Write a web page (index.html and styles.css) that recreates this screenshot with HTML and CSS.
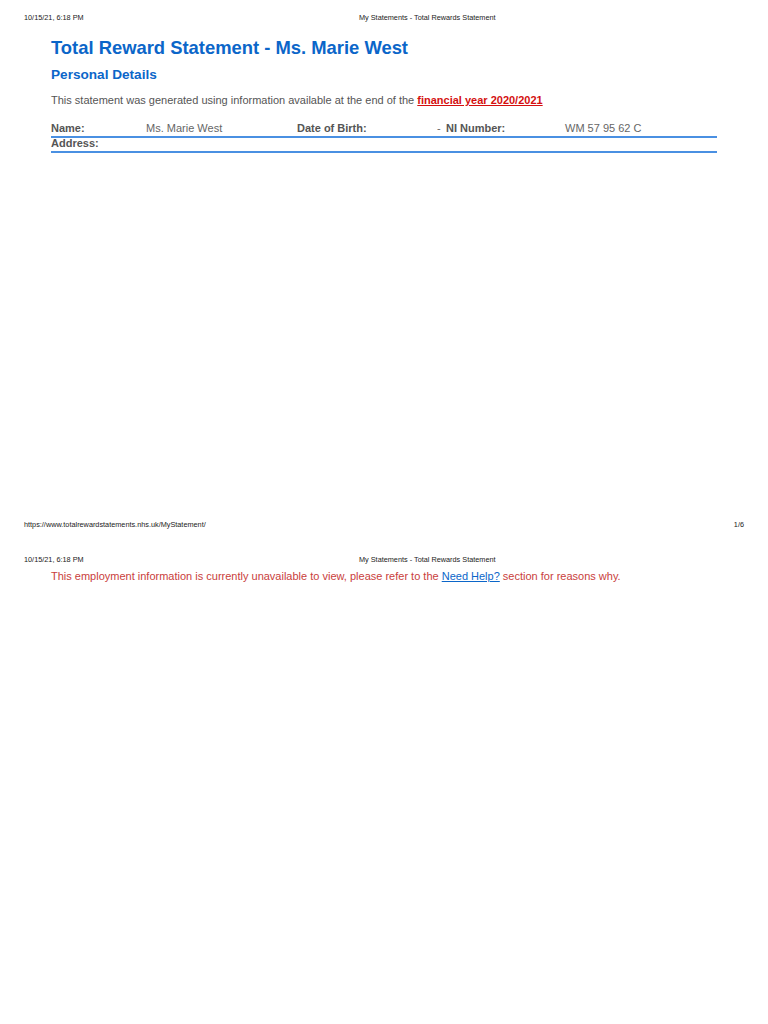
FILE: index.html
```html
<!DOCTYPE html>
<html lang="en">
<head>
  <meta charset="UTF-8" />
  <meta name="viewport" content="width=device-width, initial-scale=1.0" />
  <title>My Statements - Total Rewards Statement</title>
  <link rel="stylesheet" href="styles.css">
</head>
<body>
  <div class="sheet first">
    <div class="print-head">
      <span class="ph-date">10/15/21, 6:18 PM</span>
      <span class="ph-title">My Statements - Total Rewards Statement</span>
    </div>

    <div class="content">
      <h1 class="title">Total Reward Statement - Ms. Marie West</h1>
      <h2 class="section">Personal Details</h2>
      <p class="intro">This statement was generated using information available at the end of the <a class="fy" href="#">financial year 2020/2021</a></p>

      <div class="details">
        <div class="row">
          <span class="lbl c1">Name:</span>
          <span class="val c2">Ms. Marie West</span>
          <span class="lbl c3">Date of Birth:</span>
          <span class="val c4">-</span>
          <span class="lbl c5">NI Number:</span>
          <span class="val c6">WM 57 95 62 C</span>
        </div>
        <div class="row">
          <span class="lbl c1">Address:</span>
        </div>
      </div>
    </div>

    <div class="print-foot">
      <span>https://www.totalrewardstatements.nhs.uk/MyStatement/</span>
      <span>1/6</span>
    </div>
  </div>

  <div class="sheet second">
    <div class="print-head">
      <span class="ph-date">10/15/21, 6:18 PM</span>
      <span class="ph-title">My Statements - Total Rewards Statement</span>
    </div>
    <div class="content">
      <p class="unavailable">This employment information is currently unavailable to view, please refer to the <a class="help" href="#">Need Help?</a> section for reasons why.</p>
    </div>
  </div>
</body>
</html>
```

FILE: styles.css
```css
:root {
  --blue: #0b66c9;
  --line: #4a90e2;
  --text: #555;
  --red: #d40f0f;
  --soft-red: #c9403c;
}

body {
  margin: 0;
  font-family: "Liberation Sans", Arial, sans-serif;
  background: #fff;
  color: var(--text);
}

.sheet {
  display: flex;
  flex-direction: column;
}

.sheet.first {
  height: 540px;
}

.print-head {
  display: flex;
  align-items: center;
  padding: 12px 24px 0 24px;
  height: 10px;
  font-size: 7.3px;
  color: #222;
}

.ph-date {
  width: 335px;
}

.content {
  padding: 0 51px;
  flex: 1;
}

.title {
  margin: 15px 0 0 0;
  font-size: 18.4px;
  line-height: 22px;
  color: var(--blue);
  font-weight: bold;
}

.section {
  margin: 8px 0 0 0;
  font-size: 13.6px;
  line-height: 16px;
  color: var(--blue);
  font-weight: bold;
}

.intro {
  margin: 10px 0 0 0;
  font-size: 11px;
  line-height: 14px;
}

.fy {
  color: var(--red);
  font-weight: bold;
  text-decoration: underline;
}

.details {
  margin-top: 16px;
  width: 666px;
}

.row {
  display: flex;
  align-items: flex-start;
  height: 11px;
  line-height: 11px;
  padding-bottom: 2px;
  border-bottom: 2px solid var(--line);
  font-size: 11px;
}

.lbl {
  font-weight: bold;
  color: #555;
}

.val {
  color: #666;
}

.c1 { width: 95px; }
.c2 { width: 151px; }
.c3 { width: 140px; }
.c4 { width: 9px; }
.c5 { width: 119px; }

.print-foot {
  display: flex;
  justify-content: space-between;
  padding: 0 24px 11px 24px;
  font-size: 7.3px;
  color: #222;
}

.sheet.second .print-head {
  padding-top: 14px;
}

.unavailable {
  margin: 5px 0 0 0;
  font-size: 11px;
  line-height: 14px;
  color: var(--soft-red);
}

.help {
  color: var(--blue);
  text-decoration: underline;
}
```
